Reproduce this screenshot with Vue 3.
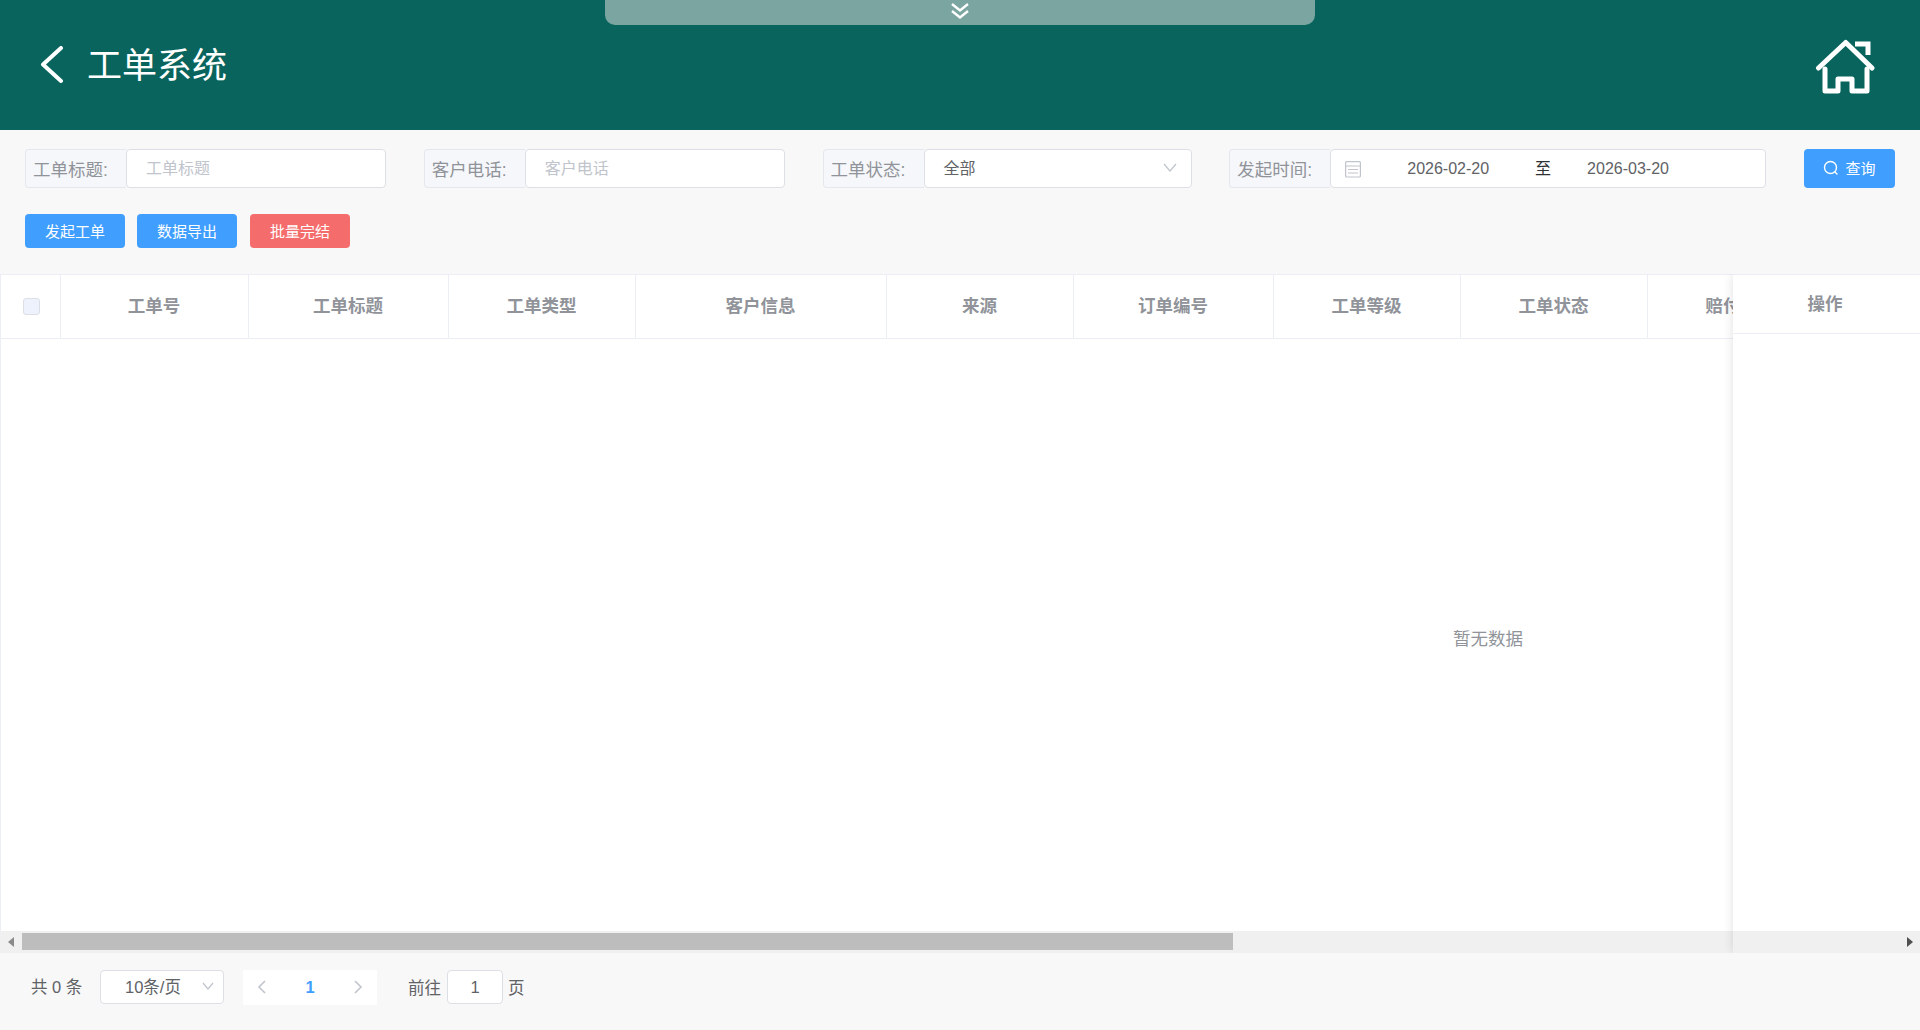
<template>
  <div class="page">
    <div class="pull-tab">
      <svg width="20" height="18" viewBox="0 0 20 18" fill="none" stroke="#fff" stroke-width="2.4">
        <polyline points="2,2 10,8.5 18,2" />
        <polyline points="2,9 10,15.5 18,9" />
      </svg>
    </div>

    <header class="topbar">
      <div class="topbar-left">
        <svg width="24" height="38" viewBox="0 0 24 38" fill="none" stroke="#fff" stroke-width="4" stroke-linecap="round" stroke-linejoin="round">
          <polyline points="21,2 3,18.5 21,35" />
        </svg>
        <h1 class="title">工单系统</h1>
      </div>
      <svg class="home" width="60" height="56" viewBox="0 0 60 56" fill="none" stroke="#fff" stroke-width="5" stroke-linecap="round">
        <path d="M3.5 29 30.7 3.5 57 29" stroke-linejoin="round" />
        <path d="M40 5H53V16" stroke-linecap="butt" />
        <path d="M10 30V52H23V40H37V52H52V30" stroke-linejoin="round" />
      </svg>
    </header>

    <section class="filters">
      <div class="group g1">
        <span class="label">工单标题:</span>
        <div class="field placeholder">工单标题</div>
      </div>
      <div class="group g1">
        <span class="label">客户电话:</span>
        <div class="field placeholder">客户电话</div>
      </div>
      <div class="group g3">
        <span class="label">工单状态:</span>
        <div class="field select-field">
          <span>全部</span>
          <svg width="14" height="9" viewBox="0 0 14 9" fill="none" stroke="#c0c4cc" stroke-width="1.2">
            <polyline points="1,1 7,8 13,1" />
          </svg>
        </div>
      </div>
      <div class="group g4">
        <span class="label">发起时间:</span>
        <div class="field date-field">
          <svg width="16" height="18" viewBox="0 0 16 18" fill="none" stroke="#c0c4cc" stroke-width="1.2">
            <rect x="0.6" y="1.6" width="14.8" height="15.4" rx="1" />
            <path d="M1 6H15M3 9.5H13M3 13H13" />
          </svg>
          <span class="date d1">2026-02-20</span>
          <span class="to">至</span>
          <span class="date d2">2026-03-20</span>
        </div>
      </div>
      <button class="btn query">
        <svg width="16" height="16" viewBox="0 0 16 16" fill="none" stroke="#fff" stroke-width="1.4" stroke-linecap="round">
          <circle cx="7.5" cy="7.5" r="6" />
          <path d="M12 12 14 14" />
        </svg>
        查询
      </button>
    </section>

    <section class="actions">
      <button class="btn">发起工单</button>
      <button class="btn">数据导出</button>
      <button class="btn danger">批量完结</button>
    </section>

    <section class="table-wrap">
      <div class="table-clip">
        <table class="grid">
          <colgroup>
            <col v-for="col in columns" :key="col.name" :style="{ width: col.width + 'px' }" />
          </colgroup>
          <thead>
            <tr>
              <th v-for="col in columns" :key="col.name">
                <span v-if="col.check" class="check"></span>
                <template v-else>{{ col.name }}</template>
              </th>
            </tr>
          </thead>
          <tbody>
            <tr>
              <td class="empty" :colspan="columns.length">暂无数据</td>
            </tr>
          </tbody>
        </table>
      </div>

      <div class="scrollbar">
        <span class="arrow left"></span>
        <div class="thumb"></div>
        <span class="arrow right"></span>
      </div>

      <div class="fixed-col">
        <div class="fixed-head">操作</div>
        <div class="fixed-body"></div>
      </div>
    </section>

    <footer class="pager">
      <span class="total">共 0 条</span>
      <div class="size-select">
        <span>10条/页</span>
        <svg width="12" height="8" viewBox="0 0 12 8" fill="none" stroke="#c0c4cc" stroke-width="1.2">
          <polyline points="1,1 6,7 11,1" />
        </svg>
      </div>
      <div class="pages">
        <svg width="10" height="14" viewBox="0 0 10 14" fill="none" stroke="#c0c4cc" stroke-width="1.6">
          <polyline points="8,1 2,7 8,13" />
        </svg>
        <span class="current">1</span>
        <svg width="10" height="14" viewBox="0 0 10 14" fill="none" stroke="#c0c4cc" stroke-width="1.6">
          <polyline points="2,1 8,7 2,13" />
        </svg>
      </div>
      <span class="goto">前往</span>
      <div class="goto-input">1</div>
      <span class="goto-end">页</span>
    </footer>
  </div>
</template>

<script setup>
const columns = [
  { name: 'check', width: 60, check: true },
  { name: '工单号', width: 188 },
  { name: '工单标题', width: 200 },
  { name: '工单类型', width: 187 },
  { name: '客户信息', width: 251 },
  { name: '来源', width: 187 },
  { name: '订单编号', width: 200 },
  { name: '工单等级', width: 187 },
  { name: '工单状态', width: 187 },
  { name: '赔付金额', width: 187 },
  { name: '', width: 1142 },
]
</script>

<style>
html,
body {
  margin: 0;
  background: #f8f8f8;
}
</style>

<style scoped>
.page {
  position: relative;
  height: 1030px;
  display: flex;
  flex-direction: column;
  overflow: hidden;
  background: #f8f8f8;
  font-family: "Liberation Sans", "Noto Sans CJK SC", sans-serif;
  color: #606266;
}

.pull-tab {
  position: absolute;
  top: 0;
  left: 605px;
  width: 710px;
  height: 25px;
  display: flex;
  justify-content: center;
  align-items: flex-start;
  padding-top: 2px;
  box-sizing: border-box;
  background: #7aa5a0;
  border-radius: 0 0 10px 10px;
}

.topbar {
  height: 130px;
  flex: none;
  display: flex;
  align-items: center;
  justify-content: space-between;
  padding: 0 47px 0 40px;
  background: #09645d;
}

.topbar-left {
  display: flex;
  align-items: center;
  gap: 23px;
}

.title {
  margin: 2px 0 0;
  font-size: 35px;
  font-weight: 400;
  line-height: 46px;
  color: #fff;
}

.home {
  margin-top: 3px;
  margin-right: -2px;
}

.filters {
  display: flex;
  justify-content: space-between;
  padding: 19px 25px 0;
}

.group {
  display: flex;
  height: 39px;
  box-sizing: border-box;
  width: 361px;
}

.g3 {
  width: 369px;
}

.g4 {
  width: 537px;
}

.label {
  flex: none;
  width: 101px;
  box-sizing: border-box;
  padding: 0 0 0 7px;
  display: flex;
  align-items: center;
  font-size: 17.5px;
  color: #909399;
  background: #f5f7fa;
  border: 1px solid #e4e7ed;
  border-right: 0;
  border-radius: 4px 0 0 4px;
  white-space: nowrap;
}

.field {
  flex: 1;
  display: flex;
  align-items: center;
  box-sizing: border-box;
  padding: 0 0 3px 19px;
  font-size: 16px;
  background: #fff;
  border: 1px solid #dcdfe6;
  border-radius: 4px;
}

.placeholder {
  color: #c0c4cc;
}

.select-field {
  justify-content: space-between;
  padding-right: 14px;
}

.date-field {
  padding: 0 0 0 14px;
}

.date {
  font-size: 16px;
  padding-top: 1px;
}

.d1 {
  margin-left: 46px;
}

.to {
  margin-left: 46px;
  padding-bottom: 4px;
  color: #303133;
}

.d2 {
  margin-left: 36px;
}

.btn {
  width: 100px;
  height: 34px;
  padding: 0 0 2px;
  display: flex;
  align-items: center;
  justify-content: center;
  gap: 6px;
  border: 0;
  border-radius: 4px;
  color: #fff;
  font-family: inherit;
  font-size: 15px;
  background: #409eff;
}

.danger {
  margin-left: 1px;
  background: #f56c6c;
}

.query {
  width: 91px;
  height: 39px;
}

.actions {
  display: flex;
  gap: 12px;
  padding: 26px 25px 0;
}

.table-wrap {
  position: relative;
  flex: 1;
  margin-top: 26px;
  display: flex;
  flex-direction: column;
  overflow: hidden;
  min-height: 0;
}

.table-clip {
  flex: 1;
  overflow: hidden;
  background: #fff;
  border-left: 1px solid #ebeef5;
  border-top: 1px solid #ebeef5;
}

.grid {
  width: 2976px;
  margin-left: -1px;
  table-layout: fixed;
  border-collapse: collapse;
}

.grid th {
  height: 59px;
  padding: 0 0 4px;
  font-size: 17.5px;
  font-weight: 700;
  color: #909399;
  text-align: center;
  border-right: 1px solid #ebeef5;
  border-bottom: 1px solid #ebeef5;
}

.check {
  display: block;
  width: 17px;
  height: 17px;
  margin: 4px 0 0 23px;
  box-sizing: border-box;
  background: #edf2fc;
  border: 1px solid #dcdfe6;
  border-radius: 3px;
}

.empty {
  height: 597px;
  padding: 0 0 2px;
  font-size: 17.5px;
  color: #909399;
  text-align: center;
}

.scrollbar {
  position: relative;
  flex: none;
  height: 22px;
  box-sizing: border-box;
  padding: 2px 0 3px 22px;
  background: #f0f0f0;
}

.thumb {
  width: 1211px;
  height: 17px;
  background: #bdbdbd;
}

.arrow {
  position: absolute;
  top: 6px;
  width: 0;
  height: 0;
  border-top: 5px solid transparent;
  border-bottom: 5px solid transparent;
  z-index: 2;
}

.arrow.left {
  left: 8px;
  border-right: 6px solid #8a8a8a;
}

.arrow.right {
  right: 7px;
  border-left: 6px solid #505050;
}

.fixed-col {
  position: absolute;
  top: 0;
  right: 0;
  bottom: 0;
  width: 187px;
  display: flex;
  flex-direction: column;
  padding-bottom: 22px;
  box-sizing: border-box;
  box-shadow: 0 0 10px rgba(0, 0, 0, 0.12);
}

.fixed-head {
  height: 60px;
  flex: none;
  display: flex;
  align-items: center;
  justify-content: center;
  padding: 0 3px 4px 0;
  box-sizing: border-box;
  font-size: 17.5px;
  font-weight: 700;
  color: #909399;
  background: #fff;
  border-top: 1px solid #ebeef5;
  border-bottom: 1px solid #ebeef5;
}

.fixed-body {
  flex: 1;
  background: #fff;
}

.pager {
  flex: none;
  height: 77px;
  display: flex;
  align-items: center;
  padding: 0 0 9px 31px;
  box-sizing: border-box;
  font-size: 16.5px;
}

.total {
  width: 69px;
  padding-bottom: 2px;
}

.size-select {
  width: 124px;
  height: 34px;
  flex: none;
  display: flex;
  align-items: center;
  justify-content: space-between;
  box-sizing: border-box;
  padding: 0 9px 2px 24px;
  background: #fff;
  border: 1px solid #dcdfe6;
  border-radius: 4px;
}

.pages {
  width: 134px;
  height: 35px;
  flex: none;
  margin-left: 19px;
  display: flex;
  align-items: center;
  justify-content: space-between;
  box-sizing: border-box;
  padding: 0 14px;
  background: #fff;
}

.current {
  font-weight: 700;
  color: #409eff;
}

.goto {
  margin-left: 31px;
}

.goto-input {
  width: 56px;
  height: 34px;
  flex: none;
  margin-left: 6px;
  display: flex;
  align-items: center;
  justify-content: center;
  box-sizing: border-box;
  background: #fff;
  border: 1px solid #dcdfe6;
  border-radius: 4px;
}

.goto-end {
  margin-left: 5px;
}
</style>
